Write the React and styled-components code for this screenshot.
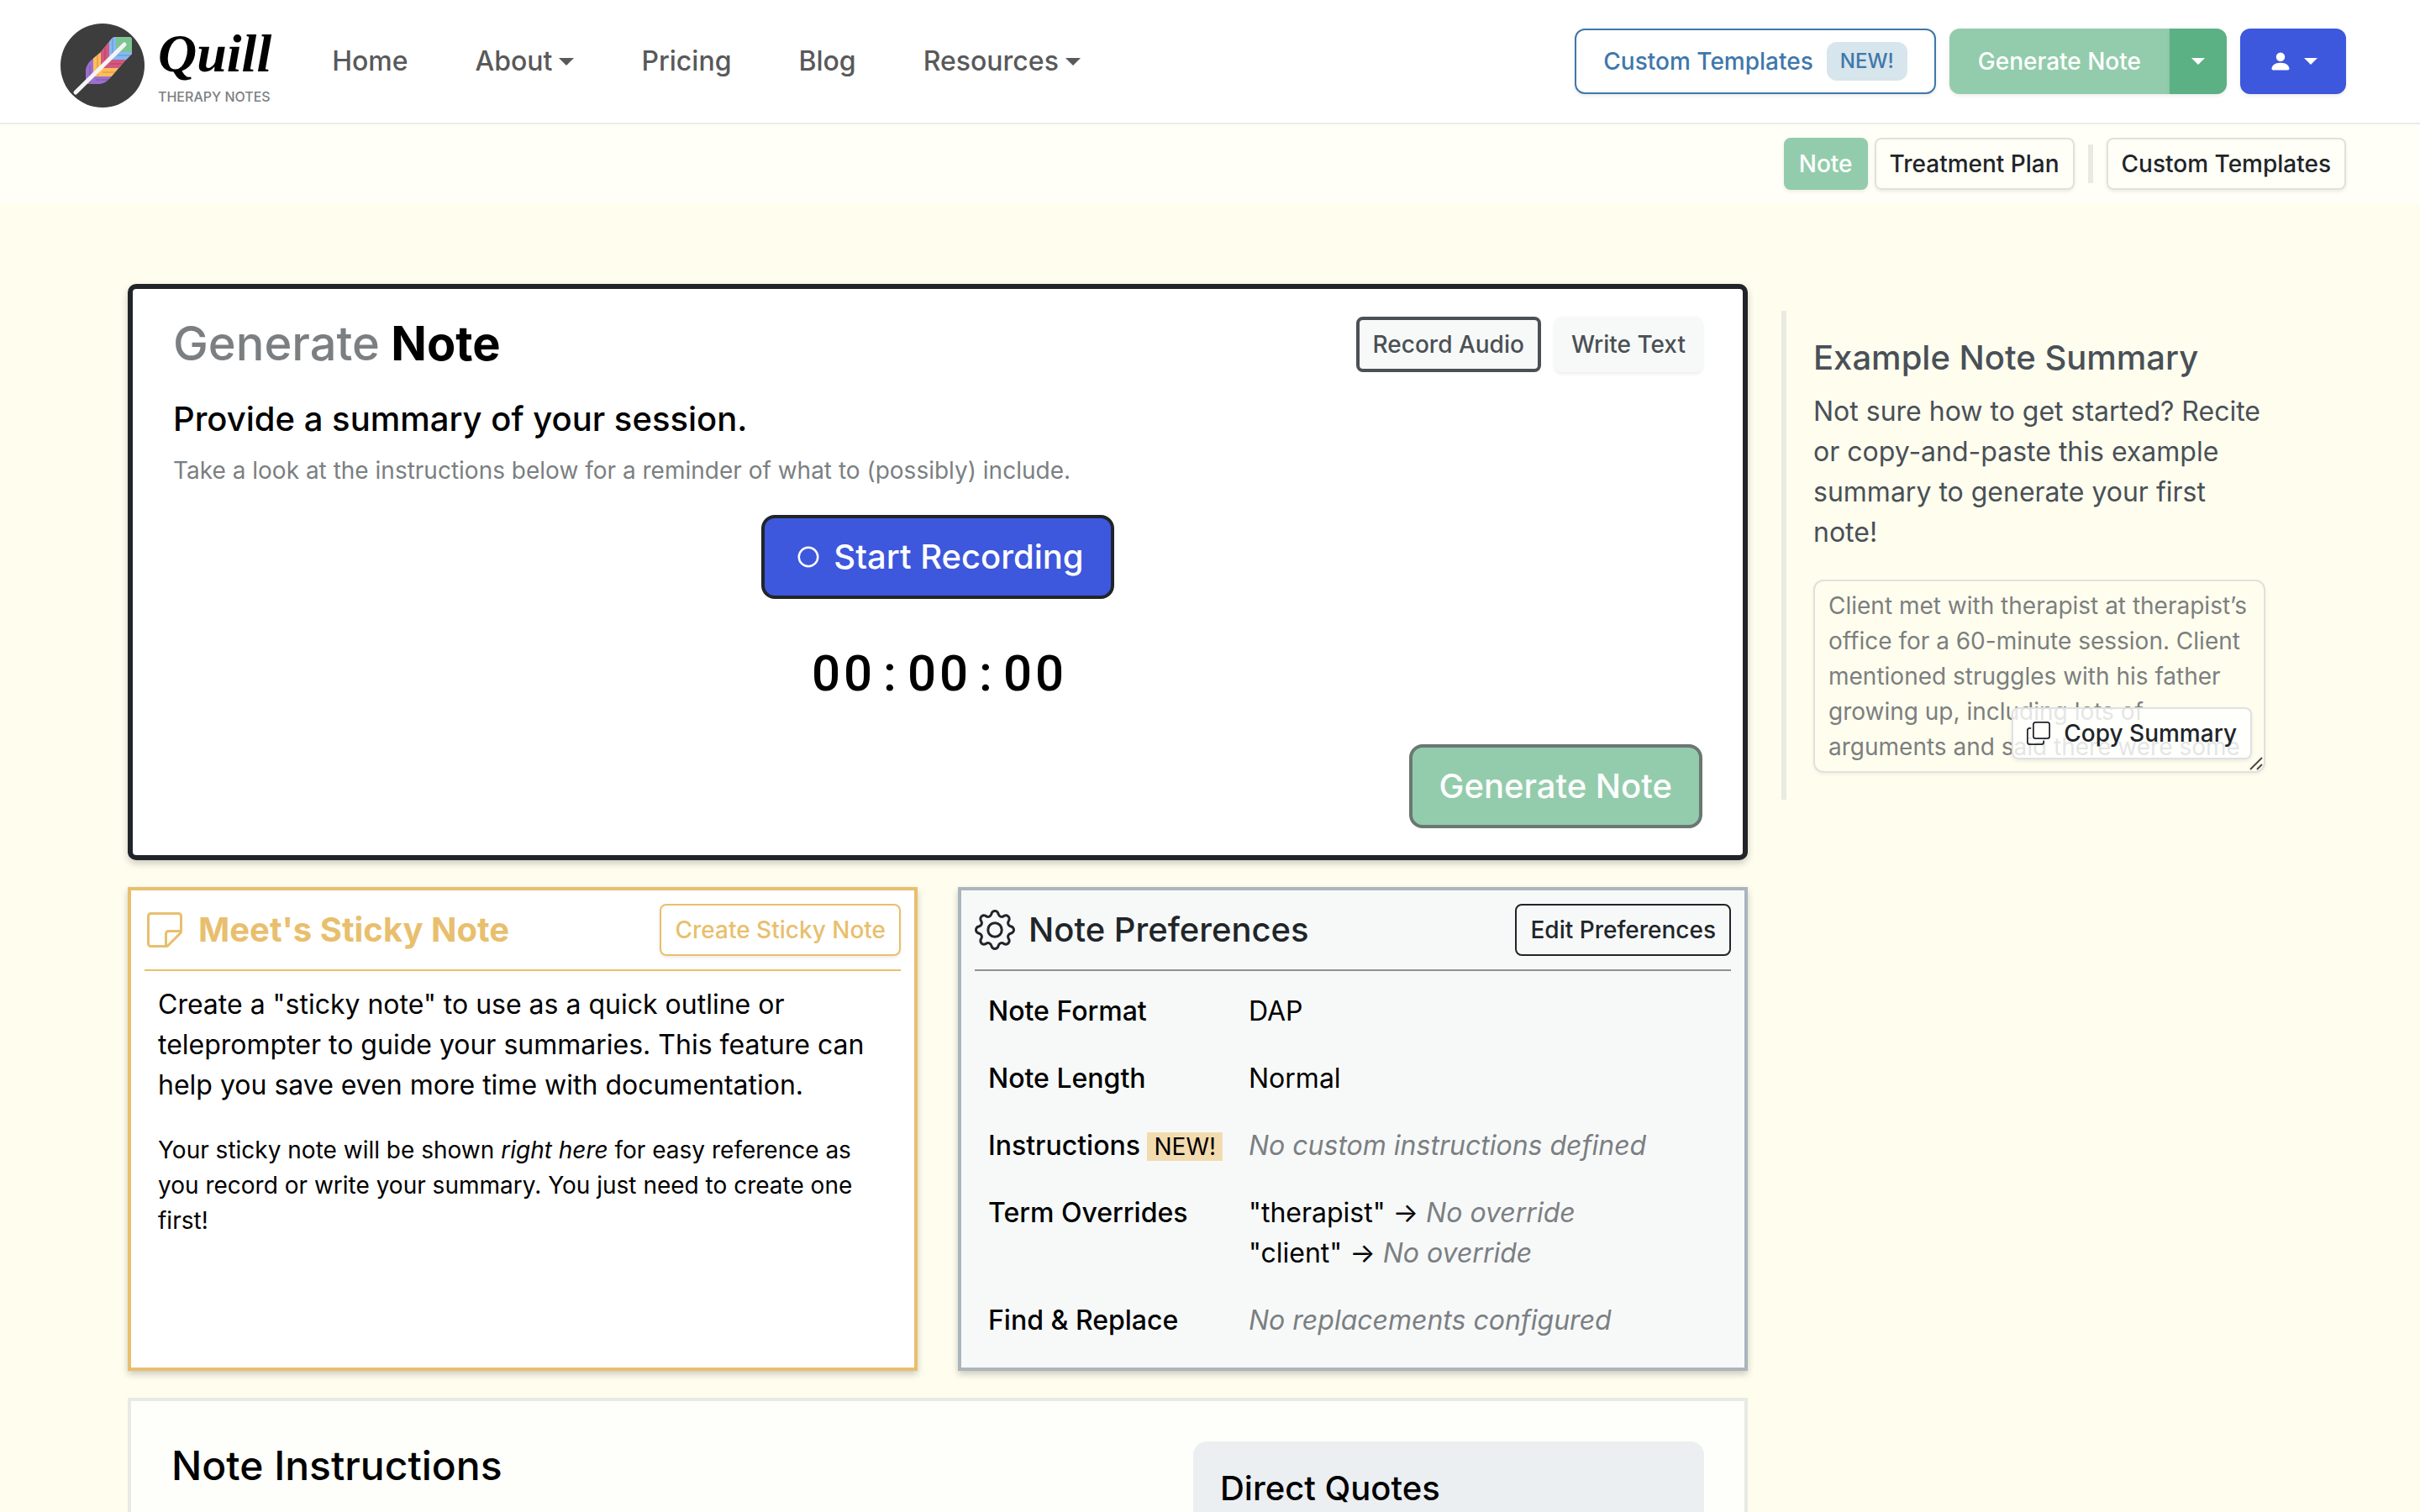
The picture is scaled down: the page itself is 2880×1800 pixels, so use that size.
import React, { useState } from 'react'
import styled, { createGlobalStyle } from 'styled-components'
import { BsCopy, BsGear, BsPersonFill, BsRecord, BsSticky } from 'react-icons/bs'


const GlobalStyle = createGlobalStyle`
    * {
        box-sizing: border-box;
    }

    body {
        margin: 0;
        background-color: #fffdee;
        color: #000;
        font-family: Inter, "Liberation Sans", sans-serif;
        font-size: 32px;
        line-height: 48px;
    }

    h1, h2, h3, p {
        margin: 0;
    }

    button, textarea {
        font-family: inherit;
    }
`;

const Page = styled.div`
    height: 100vh;
    overflow: hidden;
`;

const Header = styled.header`
    display: flex;
    align-items: center;
    justify-content: space-between;
    height: 148px;
    padding: 0 88px 0 72px;
    background-color: #fff;
    border-bottom: 2px solid #e9ebe8;
`;

const HeaderSide = styled.div`
    display: flex;
    align-items: center;
    gap: ${props => props.$gap};
`;

const Brand = styled.a`
    display: flex;
    gap: 16px;
    padding-top: 10px;
    color: #000;
    text-decoration: none;
`;

const BrandText = styled.span`
    display: flex;
    flex-direction: column;
    justify-content: space-between;
    height: 100px;
`;

const BrandName = styled.span`
    font-family: "Liberation Serif", serif;
    font-size: 64px;
    font-style: italic;
    font-weight: 700;
    line-height: 72px;
`;

const BrandTag = styled.span`
    color: #7b7f82;
    font-size: 16px;
    font-weight: 500;
    line-height: 26px;
`;

const Nav = styled.nav`
    display: flex;
    gap: 80px;
`;

const NavLink = styled.a`
    color: #58595a;
    font-weight: 500;
    text-decoration: none;
`;

const NavToggle = styled.button`
    display: flex;
    align-items: center;
    gap: 8px;
    padding: 0;
    border: 0;
    background: none;
    color: #58595a;
    font-size: 32px;
    font-weight: 500;
    line-height: 48px;
`;

const Caret = styled.span`
    width: 0;
    border-top: ${props => props.$size || '8px'} solid currentColor;
    border-right: ${props => props.$size || '8px'} solid transparent;
    border-left: ${props => props.$size || '8px'} solid transparent;
`;

const HeaderButton = styled.button`
    display: flex;
    align-items: center;
    gap: ${props => props.$gap || '16px'};
    height: 78px;
    padding: 0 ${props => props.$pad || '32px'};
    border: 2px solid ${props => props.$border || props.$bg};
    border-radius: 12px;
    background-color: ${props => props.$bg};
    color: ${props => props.$color || '#fff'};
    font-size: 28px;
    font-weight: 500;
    line-height: 42px;
    box-shadow: 0 2px 4px rgba(0, 0, 0, 0.08);
`;

const SplitButton = styled.div`
    display: flex;

    ${HeaderButton}:first-child {
        border-radius: 12px 0 0 12px;
    }

    ${HeaderButton}:last-child {
        border-radius: 0 12px 12px 0;
    }
`;

const Badge = styled.span`
    padding: 8px 16px;
    border-radius: 12px;
    background-color: #d7e5ec;
    font-size: 24px;
    line-height: 30px;
`;

const SubNav = styled.div`
    display: flex;
    align-items: center;
    justify-content: flex-end;
    gap: 16px;
    padding: 16px 88px;
    background-color: #fffff7;
`;

const Tabs = styled.div`
    display: flex;
    gap: 8px;
`;

const Divider = styled.span`
    width: 6px;
    height: 46px;
    background-color: #e9eae5;
`;

const Button = styled.button`
    flex: none;
    padding: 8px 16px;
    border: 2px solid ${props => props.$border};
    border-radius: 8px;
    background-color: ${props => props.$bg || 'transparent'};
    color: ${props => props.$color || '#212529'};
    font-size: 28px;
    font-weight: 500;
    line-height: 42px;
    box-shadow: ${props => props.$flat ? 'none' : '0 2px 4px rgba(0, 0, 0, 0.08)'};
`;

const ModeButton = styled(Button)`
    border-width: 4px;
    border-color: ${props => props.$active ? '#4b5054' : '#f7f9f9'};
    background-color: #f7f9f9;
    color: #4b5054;
`;

const LargeButton = styled.button`
    display: flex;
    align-items: center;
    gap: 10px;
    padding: 16px 32px;
    border: 4px solid ${props => props.$border};
    border-radius: 16px;
    background-color: ${props => props.$bg};
    color: #fff;
    font-size: 40px;
    font-weight: 500;
    line-height: 60px;
`;

const Content = styled.div`
    display: grid;
    grid-template-columns: minmax(0, 1fr) 576px;
    align-items: start;
    gap: 40px;
    max-width: 2640px;
    margin: 0 auto;
    padding: 96px 64px 0 32px;
`;

const Main = styled.main`
    display: flex;
    flex-direction: column;
    gap: 32px;
`;

const RecordCard = styled.section`
    padding: 32px 48px;
    border: 6px solid #212529;
    border-radius: 10px;
    background-color: #fff;
    box-shadow: 0 4px 8px rgba(0, 0, 0, 0.2);
`;

const CardRow = styled.div`
    display: flex;
    align-items: center;
    justify-content: ${props => props.$justify || 'space-between'};
`;

const ButtonGroup = styled.div`
    display: flex;
    gap: 16px;
`;

const Title = styled.h1`
    font-size: 56px;
    font-weight: 700;
    line-height: 67px;

    span {
        color: #7b7f82;
        font-weight: 500;
    }
`;

const Lead = styled.h2`
    margin-top: 32px;
    font-size: 40px;
    font-weight: 500;
    line-height: 48px;
`;

const Hint = styled.p`
    margin: 16px 0 32px;
    color: #7b7f82;
    font-size: 28px;
    line-height: 42px;
`;

const Timer = styled.div`
    display: flex;
    justify-content: center;
    padding: 40px 0 36px;
    font-family: Roboto, sans-serif;
    font-size: 60px;
    font-weight: 500;
    line-height: 97px;

    span {
        width: 38px;
        text-align: center;
    }
`;

const Panels = styled.div`
    display: grid;
    grid-template-columns: 1fr 1fr;
    gap: 48px;
`;

const Panel = styled.section`
    padding: 16px;
    border: 4px solid ${props => props.$border};
    background-color: ${props => props.$bg};
    box-shadow: 0 4px 8px rgba(0, 0, 0, 0.2);
`;

const PanelHeader = styled.div`
    display: flex;
    align-items: center;
    gap: 16px;
    padding-bottom: 16px;
    border-bottom: 2px solid ${props => props.$rule};
    color: ${props => props.$color};
`;

const PanelTitle = styled.h2`
    flex: 1;
    font-size: 40px;
    font-weight: ${props => props.$weight};
    line-height: 48px;
`;

const StickyBody = styled.div`
    display: flex;
    flex-direction: column;
    gap: 32px;
    padding: 16px;
`;

const SmallText = styled.p`
    font-size: 28px;
    line-height: 42px;
`;

const PrefTable = styled.table`
    width: 100%;
    margin-top: 8px;
    border-collapse: collapse;

    th, td {
        padding: 16px;
        text-align: left;
        vertical-align: top;
    }

    th {
        width: 310px;
        padding-right: 0;
        font-weight: 500;
        white-space: nowrap;
    }
`;

const Mark = styled.mark`
    padding: 0 8px;
    background-color: #f3dbb0;
    font-size: 28px;
    font-weight: 400;
    line-height: 42px;
`;

const Muted = styled.em`
    color: #7b7f82;
`;

const InstructionsCard = styled.section`
    display: flex;
    align-items: flex-start;
    justify-content: space-between;
    padding: 48px;
    border: 4px solid #e8eae4;
    background-color: #fefffa;
`;

const InstructionsTitle = styled.h2`
    font-size: 48px;
    font-weight: 500;
    line-height: 58px;
`;

const QuoteBox = styled.div`
    width: 608px;
    min-height: 240px;
    padding: 32px;
    border-radius: 16px;
    background-color: #ebeff2;
`;

const SideTitle = styled.h3`
    font-size: 40px;
    font-weight: 500;
    line-height: 48px;
`;

const Aside = styled.aside`
    margin-top: 32px;
    padding: 32px 0 32px 32px;
    border-left: 6px solid #e9eae0;
    color: #495057;

    p {
        margin: 16px 0 32px;
    }
`;

const Example = styled.div`
    position: relative;
`;

const ExampleText = styled.textarea`
    display: block;
    width: 100%;
    height: 230px;
    padding: 8px 16px;
    overflow: hidden;
    border: 2px solid #dfe1dc;
    border-radius: 12px;
    background-color: transparent;
    color: #7b7f7f;
    font-size: 28px;
    line-height: 42px;
    resize: none;
    box-shadow: 0 2px 4px rgba(0, 0, 0, 0.06);
`;

const Grip = styled.svg`
    position: absolute;
    right: 3px;
    bottom: 3px;
`;

const CopyButton = styled(Button)`
    position: absolute;
    right: 16px;
    bottom: 16px;
    display: flex;
    align-items: center;
    gap: 16px;
`;


function Logo() {
    return (
        <svg width="100" height="100" viewBox="0 0 100 100" aria-hidden="true">
            <defs>
                <clipPath id="feather">
                    <path d="M65 16H81Q85 16 85 20V36L77 44L59 65Q53 72 46 72H34Q30 72 30 68V55Q31 49 36 44L48 34L61 18Q63 16 65 16Z" />
                </clipPath>
            </defs>
            <circle cx="50" cy="50" r="50" fill="#3d3d3d" />
            <g clipPath="url(#feather)">
                <rect width="100" height="100" fill="#9a6fd0" />
                <rect x="39" width="61" height="63" fill="#fdbd58" />
                <rect x="48" width="52" height="53" fill="#d4577f" />
                <rect x="58" width="42" height="43" fill="#83b9f5" />
                <rect x="66" width="34" height="34" fill="#7cc590" />
                <path d="M35 50V72M44 36V62M53 26V52M62 18V42M50 58H70M59 48H80M42 67H60M68 38H86" stroke="#000" strokeOpacity="0.1" strokeWidth="2" />
            </g>
            <path d="M18 82L76 25" stroke="#f4f3f6" strokeWidth="5" strokeLinecap="round" />
        </svg>
    )
}

function App() {

    const [mode, setMode] = useState('audio')

    return (
        <Page>
            <GlobalStyle />
            <Header>
                <HeaderSide $gap="72px">
                    <Brand href="#">
                        <Logo />
                        <BrandText>
                            <BrandName>Quill</BrandName>
                            <BrandTag>THERAPY NOTES</BrandTag>
                        </BrandText>
                    </Brand>
                    <Nav>
                        <NavLink href="#">Home</NavLink>
                        <NavToggle>About<Caret $size="9px" /></NavToggle>
                        <NavLink href="#">Pricing</NavLink>
                        <NavLink href="#">Blog</NavLink>
                        <NavToggle>Resources<Caret $size="9px" /></NavToggle>
                    </Nav>
                </HeaderSide>
                <HeaderSide $gap="16px">
                    <HeaderButton $bg="#fff" $border="#4077ab" $color="#4077ab">
                        Custom Templates<Badge>NEW!</Badge>
                    </HeaderButton>
                    <SplitButton>
                        <HeaderButton $bg="#93ccac">Generate Note</HeaderButton>
                        <HeaderButton $bg="#5bb084" $pad="24px" aria-label="More"><Caret /></HeaderButton>
                    </SplitButton>
                    <HeaderButton $bg="#3d57dd" $gap="14px" aria-label="Account">
                        <BsPersonFill size={28} /><Caret />
                    </HeaderButton>
                </HeaderSide>
            </Header>
            <SubNav>
                <Tabs>
                    <Button $border="#93ccac" $bg="#93ccac" $color="#fff">Note</Button>
                    <Button $border="#e0e1de">Treatment Plan</Button>
                </Tabs>
                <Divider />
                <Button $border="#e0e1de">Custom Templates</Button>
            </SubNav>

            <Content>
                <Main>
                    <RecordCard>
                        <CardRow>
                            <Title><span>Generate</span> Note</Title>
                            <ButtonGroup>
                                <ModeButton $active={mode === 'audio'} $flat={mode === 'audio'} onClick={() => setMode('audio')}>Record Audio</ModeButton>
                                <ModeButton $active={mode === 'text'} $flat={mode === 'text'} onClick={() => setMode('text')}>Write Text</ModeButton>
                            </ButtonGroup>
                        </CardRow>
                        <Lead>Provide a summary of your session.</Lead>
                        <Hint>Take a look at the instructions below for a reminder of what to (possibly) include.</Hint>
                        <CardRow $justify="center">
                            <LargeButton $bg="#3d57dd" $border="#212529">
                                <BsRecord size={40} />Start Recording
                            </LargeButton>
                        </CardRow>
                        <Timer>
                            {'00:00:00'.split('').map((char, i) => <span key={i}>{char}</span>)}
                        </Timer>
                        <CardRow $justify="flex-end">
                            <LargeButton $bg="#93ccac" $border="#6b7772">Generate Note</LargeButton>
                        </CardRow>
                    </RecordCard>

                    <Panels>
                        <Panel $border="#e8bf6e" $bg="#fff">
                            <PanelHeader $rule="#e8bf6e" $color="#e8bf6e">
                                <BsSticky size={48} />
                                <PanelTitle $weight={700}>Meet's Sticky Note</PanelTitle>
                                <Button $border="#e8bf6e" $color="#e8bf6e">Create Sticky Note</Button>
                            </PanelHeader>
                            <StickyBody>
                                <p>Create a "sticky note" to use as a quick outline or teleprompter to guide your summaries. This feature can help you save even more time with documentation.</p>
                                <SmallText>Your sticky note will be shown <em>right here</em> for easy reference as you record or write your summary. You just need to create one first!</SmallText>
                            </StickyBody>
                        </Panel>

                        <Panel $border="#abb5bd" $bg="#f7f9f9">
                            <PanelHeader $rule="#8b9296" $color="#212529">
                                <BsGear size={48} />
                                <PanelTitle $weight={500}>Note Preferences</PanelTitle>
                                <Button $border="#212529" $flat>Edit Preferences</Button>
                            </PanelHeader>
                            <PrefTable>
                                <tbody>
                                    <tr>
                                        <th scope="row">Note Format</th>
                                        <td>DAP</td>
                                    </tr>
                                    <tr>
                                        <th scope="row">Note Length</th>
                                        <td>Normal</td>
                                    </tr>
                                    <tr>
                                        <th scope="row">Instructions <Mark>NEW!</Mark></th>
                                        <td><Muted>No custom instructions defined</Muted></td>
                                    </tr>
                                    <tr>
                                        <th scope="row">Term Overrides</th>
                                        <td>
                                            "therapist" → <Muted>No override</Muted><br />
                                            "client" → <Muted>No override</Muted>
                                        </td>
                                    </tr>
                                    <tr>
                                        <th scope="row">Find &amp; Replace</th>
                                        <td><Muted>No replacements configured</Muted></td>
                                    </tr>
                                </tbody>
                            </PrefTable>
                        </Panel>
                    </Panels>

                    <InstructionsCard>
                        <InstructionsTitle>Note Instructions</InstructionsTitle>
                        <QuoteBox>
                            <SideTitle>Direct Quotes</SideTitle>
                        </QuoteBox>
                    </InstructionsCard>
                </Main>

                <Aside>
                    <SideTitle>Example Note Summary</SideTitle>
                    <p>Not sure how to get started? Recite or copy-and-paste this example summary to generate your first note!</p>
                    <Example>
                        <ExampleText
                            aria-label="Example Note Summary"
                            readOnly
                            value="Client met with therapist at therapist’s office for a 60-minute session. Client mentioned struggles with his father growing up, including lots of arguments and said there were some"
                        />
                        <Grip width="16" height="16" viewBox="0 0 16 16" aria-hidden="true">
                            <path d="M1 15L15 1M9 15L15 9" stroke="#4a4a46" strokeWidth="2" />
                        </Grip>
                        <CopyButton $border="#dfe1e3" $bg="rgba(255, 255, 255, 0.8)">
                            <BsCopy size={28} />Copy Summary
                        </CopyButton>
                    </Example>
                </Aside>
            </Content>
        </Page>
    )
}

export default App
